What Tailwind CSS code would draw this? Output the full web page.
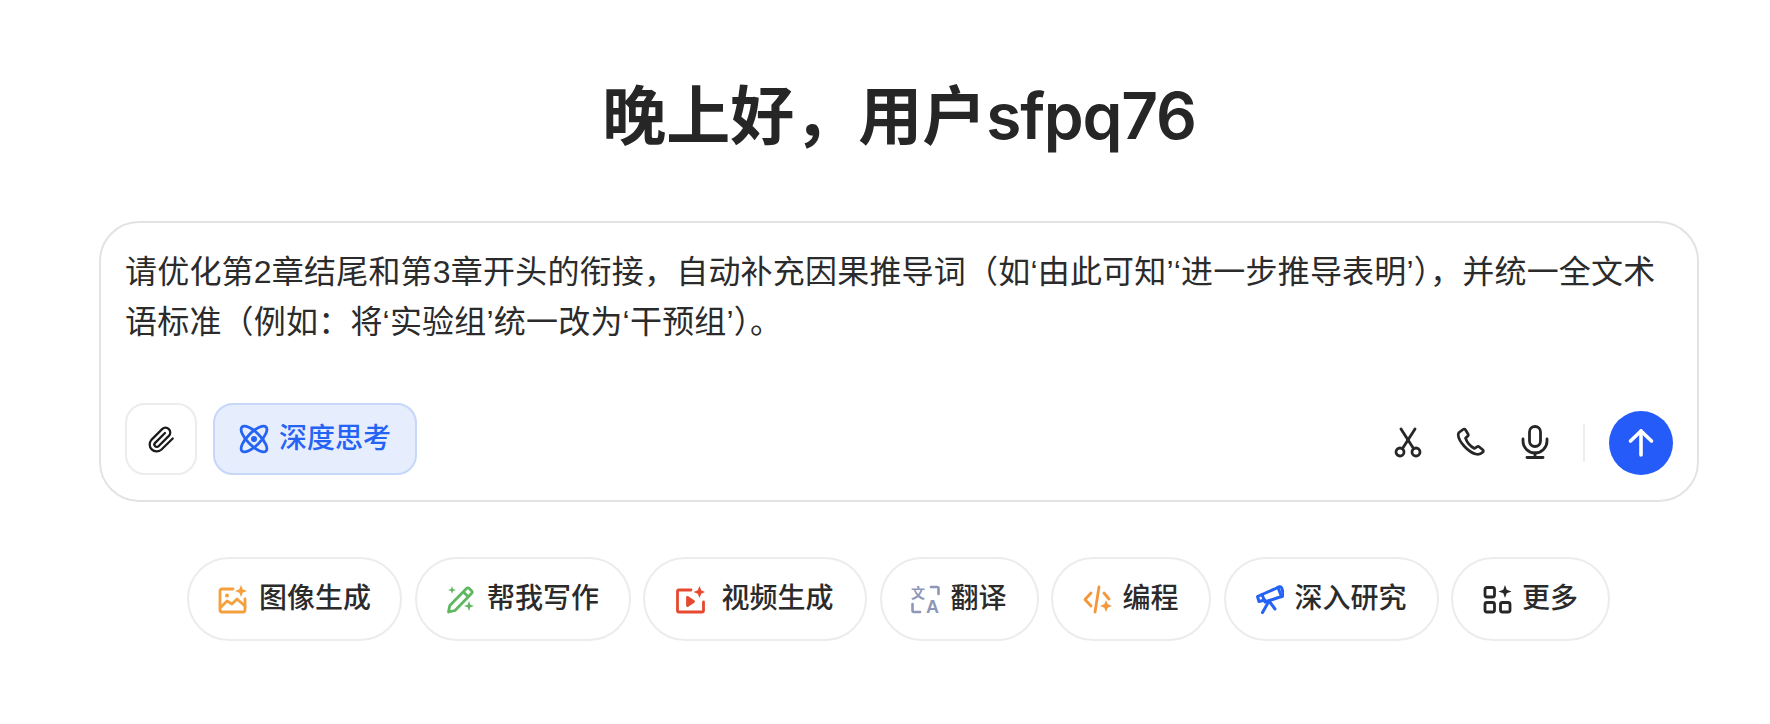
<!DOCTYPE html>
<html lang="zh-CN">
	<head>
		<meta charset="UTF-8" />
		<title>晚上好</title>
		<script src="https://cdn.jsdelivr.net/npm/@tailwindcss/browser@4"></script>
	</head>

	<body class="bg-white font-['Liberation_Sans','Noto_Sans_CJK_SC',sans-serif] text-[#262626]">
		<main class="flex flex-col items-center h-[724px] pt-[80px] pl-[28px]">
			<!-- Greeting -->
			<h1 class="font-['Inter','Noto_Sans_CJK_SC',sans-serif] text-[64px] leading-[72px] font-semibold">晚上好，用户<span class="tracking-[-1.2px]">sfpq76</span></h1>

			<!-- Prompt box -->
			<section class="mt-[69px] w-[1600px] h-[281px] flex flex-col justify-between border-2 border-[#e3e3e3] rounded-[40px] pt-[24px] px-[24px] pb-[25px]">
				<p class="text-[32px] leading-[50px] tracking-[0.2px] text-[#2b2b2b]">请优化第2章结尾和第3章开头的衔接，自动补充因果推导词（如‘由此可知’‘进一步推导表明’），并统一全文术语标准（例如：将‘实验组’统一改为‘干预组’）。</p>

				<div class="flex items-end justify-between">
					<div class="flex items-center gap-4">
						<button class="w-[72px] h-[72px] flex items-center justify-center border-2 border-[#ececec] rounded-[20px]">
							<svg class="w-[30px] h-[30px]" viewBox="0 0 24 24" fill="none" stroke="#1a1a1a" stroke-width="1.800" stroke-linecap="round" stroke-linejoin="round"><path d="M21.400 11.600 12.200 20.600a5.600 5.600 0 0 1-7.900-7.900l8.600-8.600a3.800 3.800 0 0 1 5.400 5.400l-8.300 8.300a1.900 1.900 0 0 1-2.700-2.700l7.900-7.900" /></svg>
						</button>
						<button class="h-[72px] w-[204px] flex items-center justify-center gap-[10px] bg-[#e6edfd] border-2 border-[#c6d7fa] rounded-[20px] text-[#2563f5] text-[28px] font-medium">
							<svg class="w-[30px] h-[30px]" viewBox="0 0 30 30" fill="none" stroke="#2563f5" stroke-width="2.800"><ellipse cx="15" cy="15" rx="17" ry="6.500" transform="rotate(45 15 15)" /><ellipse cx="15" cy="15" rx="17" ry="6.500" transform="rotate(-45 15 15)" /><circle cx="15" cy="15" r="3" fill="#2563f5" stroke="none" /></svg>
							深度思考
						</button>
					</div>

					<div class="flex items-center">
						<button class="w-[32px] h-[36px] flex items-center justify-center -mt-[3px]">
							<svg class="w-[30px] h-[32px]" viewBox="0 0 30 32" fill="none" stroke="#262626" stroke-width="2.800" stroke-linecap="round"><circle cx="7" cy="26" r="4" /><circle cx="23" cy="26" r="4" /><path d="M9.500 22.500 22 3" /><path d="M20.500 22.500 8 3" /></svg>
						</button>
						<button class="ml-[31px] w-[32px] h-[36px] flex items-center justify-center -mt-[3px]">
							<svg class="w-[32px] h-[32px]" viewBox="0 0 32 32" fill="none" stroke="#262626" stroke-width="2.700" stroke-linejoin="round"><path d="M4 6.500 8 3.500c1-.7 2-.4 2.600.5l2.400 4c.5.900.3 1.800-.5 2.400l-2 1.600c1.500 4.500 5 8.500 9 10.500l2.400-1.700c.8-.5 1.700-.5 2.400.1l3.400 2.800c.9.800.9 1.800 0 2.600-1.500 1.400-3.500 2.500-6 2C13 26.500 3.500 15 3.200 9c0-1 .2-1.900.8-2.500z" /></svg>
						</button>
						<button class="ml-[32px] w-[32px] h-[36px] flex items-center justify-center -mt-[3px]">
							<svg class="w-[30px] h-[34px]" viewBox="0 0 30 34" fill="none" stroke="#262626" stroke-width="2.800" stroke-linecap="round"><rect x="9.500" y="1.500" width="11" height="20" rx="5.500" /><path d="M3 14v2a12 12 0 0 0 24 0v-2" /><path d="M15 28v4" /><path d="M7 32.500h16" /></svg>
						</button>
						<span class="ml-[32px] w-[2px] h-[38px] bg-[#eeeeee]"></span>
						<button class="ml-[24px] w-[64px] h-[64px] rounded-full bg-[#255cf9] flex items-center justify-center">
							<svg class="w-[28px] h-[30px]" viewBox="0 0 28 30" fill="none" stroke="#ffffff" stroke-width="3.600" stroke-linecap="round" stroke-linejoin="round"><path d="M14 27V3" /><path d="M3.500 13 14 3l10.500 10" /></svg>
						</button>
					</div>
				</div>
			</section>

			<!-- Shortcuts -->
			<nav class="mt-[55px] -ml-[1px] flex items-center gap-[12.500px] text-[28px] text-[#2b2b2b] font-medium">
				<button class="h-[84px] w-[215px] flex items-center justify-center gap-[12px] border-2 border-[#ececec] rounded-full">
					<svg class="w-[29px] h-[29px]" viewBox="0 0 29 29" fill="none" stroke="#f4a03c" stroke-width="2.800" stroke-linecap="round" stroke-linejoin="round"><path d="M15 4H4a2 2 0 0 0-2 2v19a2 2 0 0 0 2 2h21a2 2 0 0 0 2-2V14" /><path d="M2 23l7-7 5 3 5-5 8 7" /><circle cx="9" cy="10.500" r="2" fill="#f4a03c" stroke="none" /><path d="M23 0l1.700 4.300 4.300 1.700-4.300 1.700-1.700 4.300-1.700-4.300-4.300-1.700 4.300-1.700z" fill="#f4a03c" stroke="none" /></svg>
					图像生成
				</button>
				<button class="h-[84px] w-[216px] flex items-center justify-center gap-[12px] border-2 border-[#ececec] rounded-full">
					<svg class="w-[29px] h-[29px]" viewBox="0 0 29 29" fill="none" stroke="#5fb760" stroke-width="2.800" stroke-linejoin="round"><path d="M2.500 27l1.300-6.500L20.500 3.500c.8-.8 2-.8 2.800 0l2.200 2.200c.8.800.8 2 0 2.800L9 25.500z" /><path d="M17.500 7l5 5" /><path d="M6 1l1 3 3 1-3 1-1 3-1-3-3-1 3-1z" fill="#5fb760" stroke="none" /><path d="M23 16l1.300 3.700L28 21l-3.700 1.300L23 26l-1.300-3.700L18 21l3.700-1.300z" fill="#5fb760" stroke="none" /></svg>
					帮我写作
				</button>
				<button class="h-[84px] w-[224px] flex items-center justify-center gap-[16px] border-2 border-[#ececec] rounded-full">
					<svg class="w-[29px] h-[29px]" viewBox="0 0 29 29" fill="none" stroke="#e5492f" stroke-width="2.800" stroke-linecap="round" stroke-linejoin="round"><path d="M15 5H3a1.500 1.500 0 0 0-1.500 1.500v19A1.500 1.500 0 0 0 3 27h23a1.500 1.500 0 0 0 1.500-1.500V17" /><path d="M11.500 12.500l6 4-6 4z" fill="#e5492f" /><path d="M23.500 1l1.700 4.300 3.800 1.700-3.800 1.700-1.700 4.300-1.700-4.300-4.300-1.700 4.300-1.700z" fill="#e5492f" stroke="none" /></svg>
					视频生成
				</button>
				<button class="h-[84px] w-[159px] flex items-center justify-center gap-[10px] border-2 border-[#ececec] rounded-full">
					<svg class="w-[29px] h-[29px] overflow-visible" viewBox="0 0 29 29" fill="none" stroke="#8f97b8" stroke-width="2.600" stroke-linecap="round" stroke-linejoin="round"><text x="0" y="13" font-size="14" font-weight="700" fill="#8f97b8" stroke="none">文</text><text x="15" y="28" font-size="18" font-weight="700" fill="#8f97b8" stroke="none">A</text><path d="M20 2h6a1.500 1.500 0 0 1 1.500 1.500V9" /><path d="M1.500 19v6.500A1.500 1.500 0 0 0 3 27h6" /></svg>
					翻译
				</button>
				<button class="h-[84px] w-[160px] flex items-center justify-center gap-[10px] border-2 border-[#ececec] rounded-full">
					<svg class="w-[29px] h-[29px]" viewBox="0 0 29 29" fill="none" stroke="#f5963a" stroke-width="2.800" stroke-linecap="round" stroke-linejoin="round"><path d="M8 8l-6 6.500 6 6.500" /><path d="M16 2l-4 25" /><path d="M21 8l5 6" /><path d="M23 15l1.700 4.300 4.300 1.700-4.300 1.700-1.700 4.300-1.700-4.300-4.300-1.700 4.300-1.700z" fill="#f5963a" stroke="none" /></svg>
					编程
				</button>
				<button class="h-[84px] w-[215px] flex items-center justify-center gap-[10px] border-2 border-[#ececec] rounded-full">
					<svg class="w-[29px] h-[29px]" viewBox="0 0 29 29" fill="none" stroke="#2563f5" stroke-width="3" stroke-linecap="round" stroke-linejoin="round"><path d="M7 9.500 23 2.500l3.500 9L10 17z" /><path d="M22.500 2.600c.8-.8 3-1.200 3.700-.4.900 1 2.300 6.200 2 8-.2 1-1.100 1.400-1.800 1.500" /><path d="M7 9.500l-4.500 2 1.500 5 6-1.500" /><path d="M14 16l-6.500 11.500" /><path d="M14 16l6 8" /></svg>
					深入研究
				</button>
				<button class="h-[84px] w-[159px] flex items-center justify-center gap-[10px] border-2 border-[#ececec] rounded-full">
					<svg class="w-[29px] h-[29px]" viewBox="0 0 29 29" fill="none" stroke="#262626" stroke-width="2.800" stroke-linejoin="round"><rect x="2" y="2.500" width="9.500" height="9.500" rx="2" /><rect x="2" y="17.500" width="9.500" height="9.500" rx="2" /><rect x="17.500" y="17.500" width="9.500" height="9.500" rx="2" /><path d="M22 0l1.700 4.800 4.800 1.700-4.800 1.700-1.700 4.800-1.700-4.800-4.800-1.700 4.800-1.700z" fill="#262626" stroke="none" /></svg>
					更多
				</button>
			</nav>
		</main>
	</body>
</html>
